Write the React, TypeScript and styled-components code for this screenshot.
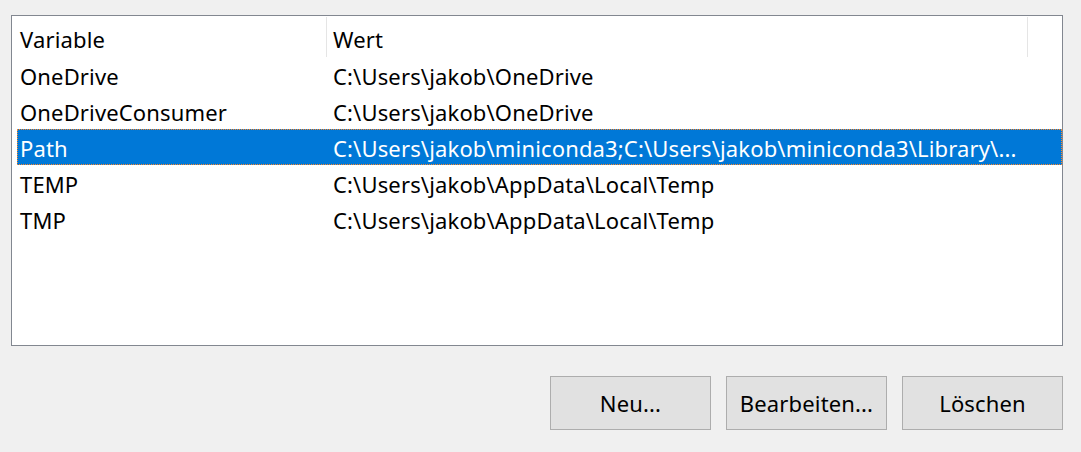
import React from "react";
import styled, { createGlobalStyle } from "styled-components";

const GlobalStyle = createGlobalStyle`
  html, body {
    margin: 0;
    padding: 0;
    background: #f0f0f0;
  }
  body {
    font-family: "Noto Sans", "Open Sans", "Liberation Sans", sans-serif;
    font-size: 22px;
    letter-spacing: 0.15px;
    color: #000;
  }
`;

const Page = styled.div`
  width: 1081px;
  height: 452px;
  box-sizing: border-box;
  padding: 15px 18px 0 11px;
  display: flex;
  flex-direction: column;
`;

const ListBox = styled.div`
  width: 1052px;
  height: 331px;
  box-sizing: border-box;
  border: 1px solid #828790;
  background: #fff;
  padding: 1px 0 0 5px;
  overflow: hidden;
`;

const Grid = styled.div`
  display: grid;
  grid-template-columns: 310px 701px;
`;

const HeaderRow = styled(Grid)`
  height: 40px;
`;

const HeaderCell = styled.div<{ $first?: boolean }>`
  box-sizing: border-box;
  border-right: 1px solid #e5e5e5;
  display: flex;
  align-items: center;
  padding-top: 3px;
  padding-left: ${(p) => (p.$first ? "3px" : "6px")};
  white-space: nowrap;
  overflow: hidden;
`;

const Row = styled(Grid)<{ $selected?: boolean }>`
  height: 36px;
  box-sizing: border-box;
  background: ${(p) => (p.$selected ? "#0078d7" : "transparent")};
  color: ${(p) => (p.$selected ? "#fff" : "#000")};
  outline: ${(p) => (p.$selected ? "1px dotted #ff8728" : "none")};
  outline-offset: -1px;
`;

const Cell = styled.div<{ $first?: boolean }>`
  display: flex;
  align-items: center;
  padding-top: 1px;
  padding-left: ${(p) => (p.$first ? "3px" : "6px")};
  white-space: nowrap;
  overflow: hidden;
`;

const ButtonBar = styled.div`
  display: flex;
  justify-content: flex-end;
  gap: 15px;
  margin-top: 30px;
  width: 1052px;
`;

const Button = styled.button`
  width: 161px;
  height: 54px;
  box-sizing: border-box;
  background: #e1e1e1;
  border: 1px solid #adadad;
  font-family: inherit;
  font-size: 22px;
  letter-spacing: 0.15px;
  color: #000;
  padding: 0;
`;

const rows = [
  { name: "OneDrive", value: "C:\\Users\\jakob\\OneDrive" },
  { name: "OneDriveConsumer", value: "C:\\Users\\jakob\\OneDrive" },
  {
    name: "Path",
    value: "C:\\Users\\jakob\\miniconda3;C:\\Users\\jakob\\miniconda3\\Library\\...",
    selected: true,
  },
  { name: "TEMP", value: "C:\\Users\\jakob\\AppData\\Local\\Temp" },
  { name: "TMP", value: "C:\\Users\\jakob\\AppData\\Local\\Temp" },
];

export default function App() {
  return (
    <>
      <GlobalStyle />
      <Page>
        <ListBox>
          <HeaderRow>
            <HeaderCell $first>Variable</HeaderCell>
            <HeaderCell>Wert</HeaderCell>
          </HeaderRow>
          {rows.map((r) => (
            <Row key={r.name} $selected={r.selected}>
              <Cell $first>{r.name}</Cell>
              <Cell>{r.value}</Cell>
            </Row>
          ))}
        </ListBox>
        <ButtonBar>
          <Button>Neu...</Button>
          <Button>Bearbeiten...</Button>
          <Button>Löschen</Button>
        </ButtonBar>
      </Page>
    </>
  );
}
